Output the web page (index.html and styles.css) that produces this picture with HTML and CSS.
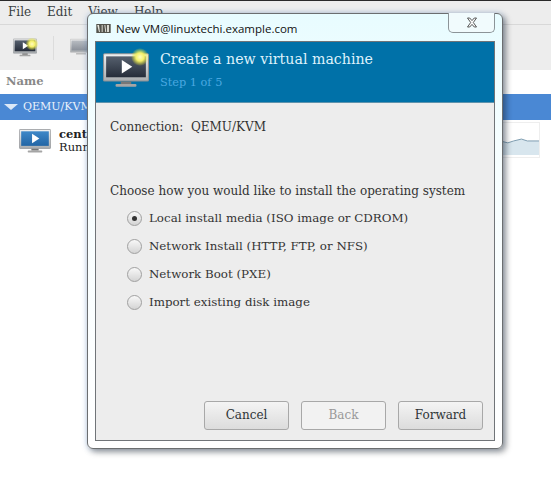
FILE: index.html
```html
<!DOCTYPE html>
<html lang="en">
<head>
<meta charset="utf-8">
<title>New VM</title>
<link rel="stylesheet" href="styles.css">
</head>
<body>
<svg class="defs" width="0" height="0" aria-hidden="true">
  <defs>
    <linearGradient id="screen" x1="0" y1="0" x2="0" y2="1"><stop offset="0" stop-color="#56606e"/><stop offset="1" stop-color="#262d3a"/></linearGradient>
    <linearGradient id="bezel" x1="0" y1="0" x2="0" y2="1"><stop offset="0" stop-color="#f2f2f2"/><stop offset="1" stop-color="#a9adb0"/></linearGradient>
    <linearGradient id="blue" x1="0" y1="0" x2="0" y2="1"><stop offset="0" stop-color="#3f88c8"/><stop offset="1" stop-color="#2265a5"/></linearGradient>
    <linearGradient id="grey" x1="0" y1="0" x2="0" y2="1"><stop offset="0" stop-color="#b8bcc2"/><stop offset="1" stop-color="#8a9099"/></linearGradient>
    <radialGradient id="glow"><stop offset="0" stop-color="#fffbc0"/><stop offset=".45" stop-color="#f4f06a"/><stop offset="1" stop-color="#e8e820" stop-opacity="0"/></radialGradient>
    <symbol id="vm" viewBox="0 0 44 34">
      <rect x="0.5" y="0.5" width="43" height="26" rx="1" fill="url(#bezel)" stroke="#8c9094"/>
      <rect x="3" y="3" width="38" height="20" fill="url(#screen)"/>
      <path d="M18 6.500 L28 13 L18 19.500Z" fill="#fff"/>
      <rect x="17" y="27" width="10" height="2.500" fill="#777"/>
      <rect x="12" y="29.500" width="20" height="2.500" rx="1" fill="#a5a5a5"/>
    </symbol>
  </defs>
</svg>

<div class="app">
  <nav class="menubar">
    <span>File</span><span>Edit</span><span>View</span><span>Help</span>
  </nav>
  <div class="toolbar">
    <svg class="tool-new" viewBox="0 0 26 24">
      <use href="#vm" x="0" y="2" width="24" height="20"/>
      <circle cx="19" cy="8" r="6.500" fill="url(#glow)"/>
    </svg>
    <i class="sep"></i>
    <svg class="tool-open" viewBox="0 0 44 34">
      <rect x="0.5" y="0.5" width="43" height="26" rx="1" fill="url(#bezel)" stroke="#b0b0b0"/>
      <rect x="3" y="3" width="38" height="20" fill="url(#grey)"/>
      <rect x="12" y="28" width="20" height="3" rx="1" fill="#bbb"/>
    </svg>
  </div>
  <div class="colhead">Name</div>
  <div class="group"><i class="caret"></i><span>QEMU/KVM</span></div>
  <div class="vmrow">
    <svg class="vm-icon" viewBox="0 0 44 34">
      <rect x="0.5" y="0.5" width="43" height="26" rx="1" fill="url(#bezel)" stroke="#8c9094"/>
      <rect x="3" y="3" width="38" height="20" fill="url(#blue)"/>
      <path d="M18 6.500 L28 13 L18 19.500Z" fill="#fff"/>
      <rect x="17" y="27" width="10" height="2.500" fill="#777"/>
      <rect x="12" y="29.500" width="20" height="2.500" rx="1" fill="#a5a5a5"/>
    </svg>
    <div class="vm-text"><b>centos</b><span>Running</span></div>
    <svg class="graph" viewBox="0 0 40 36" preserveAspectRatio="none">
      <path d="M0 19 L8 21 L14 19 L22 17 L28 19 L40 19 V34 H0Z" fill="#d8e6ee"/>
      <path d="M0 19 L8 21 L14 19 L22 17 L28 19 L40 19" fill="none" stroke="#7a9aae"/>
    </svg>
  </div>
</div>

<section class="dialog">
  <header class="titlebar">
    <svg class="tb-icon" viewBox="0 0 16 10">
      <rect width="16" height="10" fill="#55554e"/>
      <path d="M1 1h2l1 8h-1zM6 1h1v8h-1zM9 1h1l1 8h-1zM12 1h2v8h-2z" fill="#e8e8e0"/>
    </svg>
    <span class="tb-title">New VM@linuxtechi.example.com</span>
    <button class="tb-close" aria-label="Close">
      <svg viewBox="0 0 12 11"><path d="M1.5 1h2.2L6 3.600 8.300 1h2.200L7.300 5.500l3.200 4.500H8.300L6 7.400 3.700 10H1.500l3.200-4.500z" fill="#fff" stroke="#444" stroke-width=".9"/></svg>
    </button>
  </header>
  <div class="inner">
    <div class="banner">
      <svg class="banner-icon" viewBox="0 0 52 42">
        <use href="#vm" x="0" y="6" width="46" height="36"/>
        <circle cx="37" cy="10" r="9" fill="url(#glow)"/>
      </svg>
      <div class="banner-text">
        <h1>Create a new virtual machine</h1>
        <p>Step 1 of 5</p>
      </div>
    </div>
    <div class="body">
      <p class="conn">Connection:&nbsp; QEMU/KVM</p>
      <p class="prompt">Choose how you would like to install the operating system</p>
      <ul class="options">
        <li><i class="radio on"></i>Local install media (ISO image or CDROM)</li>
        <li><i class="radio"></i>Network Install (HTTP, FTP, or NFS)</li>
        <li><i class="radio"></i>Network Boot (PXE)</li>
        <li><i class="radio"></i>Import existing disk image</li>
      </ul>
      <div class="actions">
        <button class="btn">Cancel</button>
        <button class="btn off">Back</button>
        <button class="btn">Forward</button>
      </div>
    </div>
  </div>
</section>
</body>
</html>
```
FILE: styles.css
```css
* { box-sizing: border-box; }
html, body { margin: 0; height: 100%; }
body {
  width: 551px; height: 482px; overflow: hidden; position: relative;
  background: #fff; color: #2e3436;
  font: 12px/1.2 "DejaVu Serif", serif;
}
.defs { position: absolute; }
.app { border-top: 1px solid #2a2a2a; }
.menubar {
  height: 24px; background: #ededed; border-bottom: 1px solid #d8d8d8;
  display: flex; gap: 16px; padding: 4px 0 0 8px; color: #3a3f41;
}
.toolbar {
  height: 45px; background: #ededed; display: flex; align-items: center;
  padding: 0 0 0 13px; gap: 14px;
}
.tool-new { width: 26px; height: 24px; }
.sep { width: 1px; height: 24px; background: #dcdcdc; }
.tool-open { width: 22px; height: 19px; margin-left: 2px; }
.colhead {
  height: 24px; padding: 5px 0 0 6px; font-weight: bold; font-size: 11.500px; color: #888;
  background: #fff;
}
.group {
  height: 26px; background: #4a88d4; color: #eaf2fb; display: flex; align-items: center;
  padding-left: 4px; gap: 5px; font-size: 11px;
}
.caret {
  width: 0; height: 0; border: solid transparent; border-width: 6px 7px 0;
  border-top-color: #dbe8f7;
}
.vmrow { display: flex; align-items: flex-start; padding: 8px 0 0 19px; gap: 8px; position: relative; height: 50px; }
.vm-icon { width: 32px; height: 27px; flex: none; }
.vm-text { display: flex; flex-direction: column; font-size: 11.500px; color: #222; line-height: 13px; }
.graph {
  position: absolute; left: 500px; top: 2px; width: 40px; height: 36px;
  border: 1px solid #eee; border-left: 0;
}

.dialog {
  position: absolute; left: 87px; top: 13px; width: 416px; height: 436px;
  background: linear-gradient(#e8fcff, #f6feff 30%, #fff); border: 1px solid #6b6e70; border-radius: 6px;
  box-shadow: 3px 3px 6px rgba(0,0,0,.4), 0 0 6px rgba(90,150,220,.35);
  display: flex; flex-direction: column; padding: 0 7px 7px;
}
.titlebar { height: 27px; flex: none; display: flex; align-items: center; gap: 5px; position: relative; font: 11.500px "Open Sans", sans-serif; color: #111; padding: 2px 0 0 1px; }
.tb-icon { width: 15px; height: 9px; }
.tb-close {
  position: absolute; right: 0; top: -1px; width: 47px; height: 20px; padding: 0;
  background: #f1fbfd; border: 1px solid #8c9498; border-top: 0; border-radius: 0 0 5px 5px;
  display: flex; align-items: center; justify-content: center;
}
.tb-close svg { width: 12px; height: 11px; }
.inner {
  flex: 1; display: flex; flex-direction: column; border: 1px solid #707478; background: #ededed;
}
.banner {
  height: 61px; flex: none; background: #0071a8; border-bottom: 1px solid #5e93ad;
  display: flex; align-items: flex-start; padding: 5px 0 0 7px; gap: 5px;
}
.banner-icon { width: 52px; height: 42px; flex: none; }
.banner-text h1 { margin: 3px 0 0; font-size: 14.200px; font-weight: normal; color: #dff2fb; line-height: 18px; }
.banner-text p { margin: 7px 0 0; font-size: 11.300px; color: #4aa8e0; line-height: 16px; }
.body { flex: 1; display: flex; flex-direction: column; padding: 16px 11px 10px 14px; color: #333; }
.conn { margin: 0; line-height: 16px; }
.prompt { margin: 48px 0 0; line-height: 16px; }
.options { list-style: none; margin: 5px 0 0; padding: 0 0 0 17px; font-size: 11.850px; }
.options li { display: flex; align-items: center; height: 28px; gap: 7px; }
.radio {
  width: 15px; height: 15px; border-radius: 50%; border: 1px solid #a0a0a0; flex: none;
  background: linear-gradient(#f8f8f8, #d4d4d4); display: flex; align-items: center; justify-content: center;
}
.radio.on::after { content: ""; width: 5px; height: 5px; border-radius: 50%; background: #333; }
.actions { margin-top: auto; display: flex; justify-content: flex-end; gap: 12px; }
.btn {
  width: 85px; height: 29px; padding: 0; font: inherit; color: #2e3436;
  border: 1px solid #a8a8a8; border-radius: 3px; background: linear-gradient(#f4f4f4, #dcdcdc);
}
.btn.off { background: #f2f2f2; color: #999; }
```
